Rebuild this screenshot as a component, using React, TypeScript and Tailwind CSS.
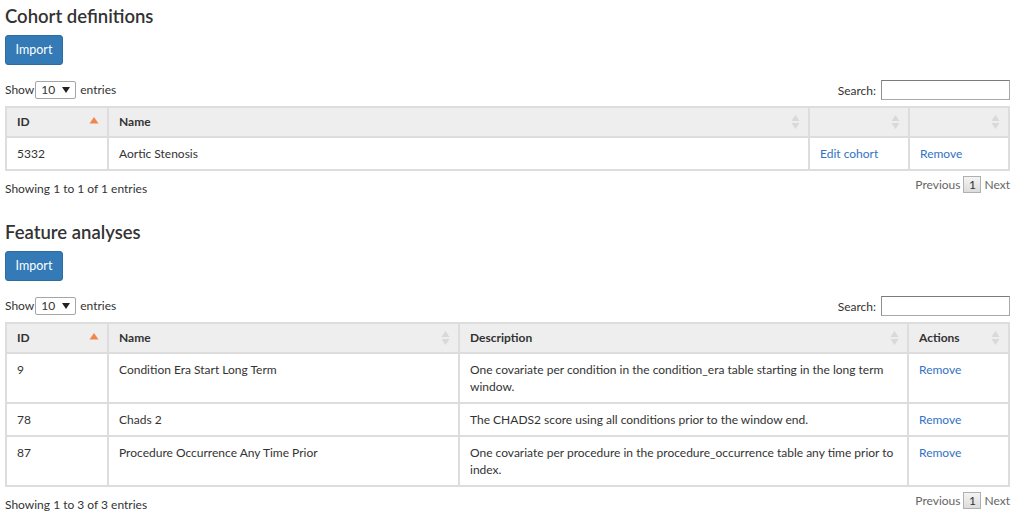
import React from "react";

const FONT = { fontFamily: '"Segoe UI", Lato, "Liberation Sans", sans-serif' };

function SortBoth() {
  return (
    <svg width="9" height="16" viewBox="0 0 9 16" className="shrink-0">
      <path d="M4.5 1 L8.5 7 L0.5 7 Z" fill="#d9d9d9" />
      <path d="M4.5 15 L8.5 9 L0.5 9 Z" fill="#d9d9d9" />
    </svg>
  );
}

function SortAsc() {
  return (
    <svg width="10" height="16" viewBox="0 0 10 16" className="shrink-0">
      <path d="M5 3 L9.5 9.5 L0.5 9.5 Z" fill="#f2864a" />
    </svg>
  );
}

function Controls() {
  return (
    <div className="flex h-[20px] items-center justify-between leading-[17px]">
      <div className="flex items-center pb-[1px] text-[12px] text-[#333]">
        <span>Show</span>
        <div className="ml-[1px] mr-[4px] flex h-[18px] w-[41px] items-center justify-between rounded-[2px] border border-[#a6a6a6] bg-white pl-[5px] pr-[5px] text-[12px]">
          <span>10</span>
          <svg width="8" height="6" viewBox="0 0 8 6">
            <path d="M0 0 L8 0 L4 6 Z" fill="#222" />
          </svg>
        </div>
        <span>entries</span>
      </div>
      <div className="flex items-center text-[12px] text-[#333]">
        <span className="mr-[5px]">Search:</span>
        <div className="h-[20px] w-[129px] border border-[#a9a9a9] border-t-[#7a7a7a] border-l-[#8f8f8f] bg-white" />
      </div>
    </div>
  );
}

function Footer({ text }: { text: string }) {
  return (
    <div className="flex items-start justify-between text-[12px] leading-[17px] text-[#333]">
      <div className="pt-[9px]">{text}</div>
      <div className="flex items-center pt-[5px] text-[#666]">
        <span>Previous</span>
        <span className="mx-[3px] flex h-[17px] w-[18px] items-center justify-center border border-[#b0b0b0] bg-gradient-to-b from-[#f4f4f4] to-[#dcdcdc] text-[#333]">
          1
        </span>
        <span>Next</span>
      </div>
    </div>
  );
}

const th =
  "border-2 border-[#dddddd] bg-[#eeeeee] pl-[10px] pr-[8px] pt-[5px] pb-[6px] text-left font-bold leading-[17px]";
const td = "border-2 border-[#dddddd] px-[10px] py-[7px] align-top leading-[17px]";
const link = "text-[#3372c4]";
const btn =
  "mt-[9px] block h-[30px] w-[58px] rounded-[3px] border border-[#2e6da4] bg-[#337ab7] text-[12.5px] text-white";

function Head({ label, sort }: { label: string; sort: "asc" | "both" }) {
  return (
    <div className="flex h-[17px] items-center justify-between">
      <span>{label}</span>
      {sort === "asc" ? <SortAsc /> : <SortBoth />}
    </div>
  );
}

export default function App() {
  return (
    <div style={FONT} className="w-[1020px] bg-white pl-[5px] pr-[10px] pt-[6px] text-[12px] text-[#333]">
      {/* Cohort definitions */}
      <h2 className="text-[18.5px] font-semibold leading-[20px] text-[#333]">Cohort definitions</h2>
      <button className={btn}>Import</button>
      <div className="mt-[15px]">
        <Controls />
      </div>
      <table className="mt-[6px] w-full table-fixed border-collapse text-[12px]">
        <colgroup>
          <col className="w-[102px]" />
          <col />
          <col className="w-[100px]" />
          <col className="w-[100px]" />
        </colgroup>
        <thead>
          <tr>
            <th className={th}><Head label="ID" sort="asc" /></th>
            <th className={th}><Head label="Name" sort="both" /></th>
            <th className={th}><Head label={"\u00a0"} sort="both" /></th>
            <th className={th}><Head label={"\u00a0"} sort="both" /></th>
          </tr>
        </thead>
        <tbody>
          <tr>
            <td className={td}>5332</td>
            <td className={td}>Aortic Stenosis</td>
            <td className={td}><span className={link}>Edit cohort</span></td>
            <td className={td}><span className={link}>Remove</span></td>
          </tr>
        </tbody>
      </table>
      <Footer text="Showing 1 to 1 of 1 entries" />

      {/* Feature analyses */}
      <h2 className="mt-[25px] text-[18.5px] font-semibold leading-[20px] text-[#333]">Feature analyses</h2>
      <button className={btn}>Import</button>
      <div className="mt-[15px]">
        <Controls />
      </div>
      <table className="mt-[6px] w-full table-fixed border-collapse text-[12px]">
        <colgroup>
          <col className="w-[102px]" />
          <col className="w-[351px]" />
          <col />
          <col className="w-[101px]" />
        </colgroup>
        <thead>
          <tr>
            <th className={th}><Head label="ID" sort="asc" /></th>
            <th className={th}><Head label="Name" sort="both" /></th>
            <th className={th}><Head label="Description" sort="both" /></th>
            <th className={th}><Head label="Actions" sort="both" /></th>
          </tr>
        </thead>
        <tbody>
          <tr>
            <td className={td}>9</td>
            <td className={td}>Condition Era Start Long Term</td>
            <td className={td}>One covariate per condition in the condition_era table starting in the long term window.</td>
            <td className={td}><span className={link}>Remove</span></td>
          </tr>
          <tr>
            <td className={td}>78</td>
            <td className={td}>Chads 2</td>
            <td className={td}>The CHADS2 score using all conditions prior to the window end.</td>
            <td className={td}><span className={link}>Remove</span></td>
          </tr>
          <tr>
            <td className={td}>87</td>
            <td className={td}>Procedure Occurrence Any Time Prior</td>
            <td className={td}>One covariate per procedure in the procedure_occurrence table any time prior to index.</td>
            <td className={td}><span className={link}>Remove</span></td>
          </tr>
        </tbody>
      </table>
      <Footer text="Showing 1 to 3 of 3 entries" />
      <div className="h-[20px]" />
    </div>
  );
}
